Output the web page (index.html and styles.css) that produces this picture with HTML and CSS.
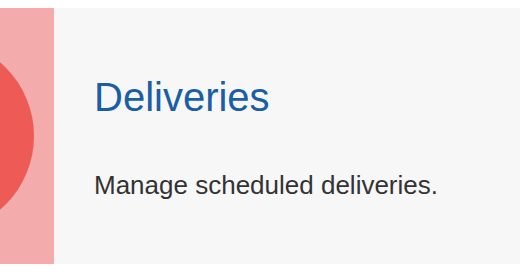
FILE: index.html
```html
<!DOCTYPE html>
<html lang="en">
<head>
<meta charset="utf-8">
<title>Deliveries</title>
<link rel="stylesheet" href="styles.css">
</head>
<body>
<div class="card">
  <div class="band"><span class="disc"></span></div>
  <div class="content">
    <h1 class="title">Deliveries</h1>
    <p class="desc">Manage scheduled deliveries.</p>
  </div>
</div>
</body>
</html>
```
FILE: styles.css
```css
html, body {
  margin: 0;
  padding: 0;
  background: #ffffff;
}
body {
  padding: 8px 0;
  font-family: "Liberation Sans", Arial, sans-serif;
}
.card {
  display: flex;
  height: 256px;
  background: #f7f7f7;
}
.band {
  position: relative;
  flex: 0 0 54px;
  background: #f4abab;
  overflow: hidden;
}
.disc {
  position: absolute;
  width: 194px;
  height: 194px;
  left: -160px;
  top: 31px;
  border-radius: 50%;
  background: #ee5b56;
}
.content {
  flex: 1;
  display: flex;
  flex-direction: column;
  justify-content: center;
  padding: 6px 0 0 40px;
  gap: 45px;
}
.title {
  margin: 0;
  font-size: 40px;
  line-height: 1.2;
  font-weight: normal;
  color: #1a5ea6;
}
.desc {
  margin: 0;
  font-size: 26px;
  line-height: 1.5;
  color: #333333;
}
```
